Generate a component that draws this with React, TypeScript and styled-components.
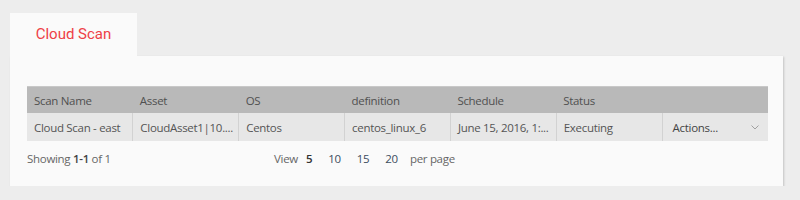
import { createGlobalStyle, styled } from "styled-components";

const GlobalStyle = createGlobalStyle`
  html, body {
    margin: 0;
    padding: 0;
    background: #ededed;
    font-family: "Open Sans", "Liberation Sans", sans-serif;
  }
`;

type Scan = {
  name: string;
  asset: string;
  os: string;
  definition: string;
  schedule: string;
  status: string;
};

// long values are shown cut short, as the list view does
const scans: Scan[] = [
  {
    name: "Cloud Scan - east",
    asset: "CloudAsset1|10....",
    os: "Centos",
    definition: "centos_linux_6",
    schedule: "June 15, 2016, 1:...",
    status: "Executing",
  },
];

const columns = ["Scan Name", "Asset", "OS", "definition", "Schedule", "Status", ""];

const App = (): JSX.Element => {
  return (
    <Page>
      <GlobalStyle />
      <Tabs>
        <Tab $active>Cloud Scan</Tab>
      </Tabs>
      <Panel>
        <Table>
          <thead>
            <tr>
              {columns.map((c, i) => (
                <Th key={i}>{c}</Th>
              ))}
            </tr>
          </thead>
          <tbody>
            {scans.map((s, i) => (
              <tr key={i}>
                <Td>{s.name}</Td>
                <Td>{s.asset}</Td>
                <Td>{s.os}</Td>
                <Td>{s.definition}</Td>
                <Td>{s.schedule}</Td>
                <Td>{s.status}</Td>
                <Td>
                  <Actions>
                    <span>Actions...</span>
                    <svg width="8" height="5" viewBox="0 0 8 5">
                      <polyline
                        points="0.5,0.5 4,4 7.5,0.5"
                        fill="none"
                        stroke="#a0a0a0"
                        strokeWidth="1"
                      />
                    </svg>
                  </Actions>
                </Td>
              </tr>
            ))}
          </tbody>
        </Table>
        <Footer>
          <div>
            Showing <b>1-1</b> of 1
          </div>
          <Pager>
            <span>View</span>
            {[5, 10, 15, 20].map((n) => (
              <PageSize key={n} $current={n === 5}>
                {n}
              </PageSize>
            ))}
            <span className="per">per page</span>
          </Pager>
          <div />
        </Footer>
      </Panel>
    </Page>
  );
};

export default App;

const Page = styled.div`
  padding: 13px 0 0 10px;
  width: 773px;
`;

const Tabs = styled.div`
  display: flex;
`;

const Tab = styled.div<{ $active?: boolean }>`
  width: 127px;
  height: 43px;
  line-height: 43px;
  text-align: center;
  background: ${(p) => (p.$active ? "#fafafa" : "transparent")};
  color: #ee4046;
  font-family: Roboto, "Liberation Sans", sans-serif;
  font-size: 15px;
`;

const Panel = styled.div`
  background: #fafafa;
  padding: 30px 15px 0 17px;
  height: 100px;
  box-shadow: 1px 1px 2px rgba(0, 0, 0, 0.18);
`;

const Table = styled.table`
  width: 100%;
  table-layout: fixed;
  border-collapse: collapse;
  font-size: 11.5px;
  letter-spacing: -0.3px;
  color: #555;
`;

const Th = styled.th`
  background: #b9b9b9;
  border-top: 1px solid #c8c8c8;
  height: 26px;
  padding: 0 7px;
  text-align: left;
  font-weight: 400;
  color: #505050;
  white-space: nowrap;
`;

const Td = styled.td`
  background: #e7e7e7;
  height: 28px;
  padding: 0 7px;
  border-left: 1px solid #d2d2d2;
  white-space: nowrap;
  overflow: hidden;

  &:first-child {
    border-left: none;
  }
`;

const Actions = styled.div`
  display: flex;
  align-items: center;
  justify-content: space-between;
  color: #444;
  padding-left: 3px;
  padding-right: 2px;
`;

const Footer = styled.div`
  display: grid;
  grid-template-columns: 1fr 1fr 1fr;
  padding-top: 9px;
  font-size: 11.5px;
  letter-spacing: -0.3px;
  line-height: 18px;
  color: #666;

  b {
    font-weight: 600;
    color: #444;
  }
`;

const Pager = styled.div`
  display: flex;

  .per {
    margin-left: 4px;
  }
`;

const PageSize = styled.span<{ $current?: boolean }>`
  padding: 0 8px;
  color: ${(p) => (p.$current ? "#333" : "#3c4d5e")};
  font-weight: ${(p) => (p.$current ? 600 : 400)};
`;
